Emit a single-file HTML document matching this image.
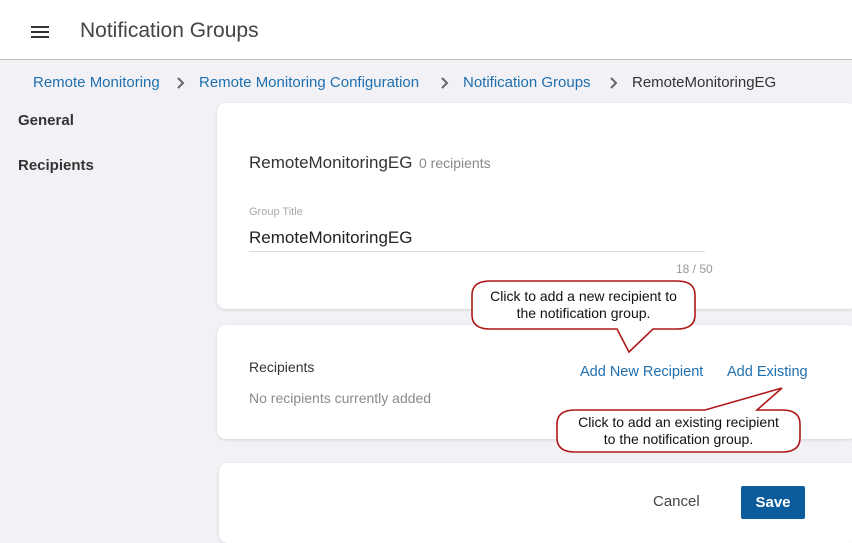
<!DOCTYPE html>
<html><head><meta charset="utf-8"><style>
*{margin:0;padding:0;box-sizing:border-box}
body{width:852px;height:529px;overflow:hidden;background:#f2f2f6;font-family:"Liberation Sans",sans-serif;position:relative}
.a{position:absolute;white-space:nowrap}
.hdr{position:absolute;left:0;top:0;width:852px;height:60px;background:#fff;border-bottom:1px solid #bdbdbd}
.card{position:absolute;background:#fff;border-radius:9px;box-shadow:0 1px 3px rgba(0,0,0,.12)}
.bl{color:#1f6fae;font-size:15px}
.gt{color:#8a8a8a;font-size:16px}
</style></head><body>
<div class="hdr">
 <div class="a" style="left:31px;top:26px;width:18px;height:2px;background:#333"></div>
 <div class="a" style="left:31px;top:31px;width:18px;height:2px;background:#333"></div>
 <div class="a" style="left:31px;top:36px;width:18px;height:2px;background:#333"></div>
 <div class="a" style="left:80px;top:19px;font-size:21px;color:#444">Notification Groups</div>
</div>
<div class="a bl" style="left:33px;top:74px">Remote Monitoring</div>
<div class="a bl" style="left:199px;top:74px">Remote Monitoring Configuration</div>
<div class="a bl" style="left:463px;top:74px">Notification Groups</div>
<div class="a" style="left:632px;top:74px;font-size:15px;color:#333">RemoteMonitoringEG</div>
<svg class="a" style="left:0;top:0" width="852" height="100">
 <g fill="none" stroke="#666" stroke-width="2">
  <polyline points="178,78 183,83 178,88"/>
  <polyline points="442,78 447,83 442,88"/>
  <polyline points="611,78 616,83 611,88"/>
 </g>
</svg>
<div class="a" style="left:18px;top:112px;font-size:15px;font-weight:bold;color:#333">General</div>
<div class="a" style="left:18px;top:157px;font-size:15px;font-weight:bold;color:#333">Recipients</div>

<div class="card" style="left:217px;top:103px;width:640px;height:206px"></div>
<div class="a" style="left:249px;top:153px;font-size:17px;color:#333">RemoteMonitoringEG</div>
<div class="a" style="left:419px;top:155px;font-size:14px;color:#888">0 recipients</div>
<div class="a" style="left:249px;top:206px;font-size:11px;color:#aaa">Group Title</div>
<div class="a" style="left:249px;top:228px;font-size:17px;color:#222">RemoteMonitoringEG</div>
<div class="a" style="left:249px;top:251px;width:456px;height:1px;background:#ddd"></div>
<div class="a" style="left:676px;top:262px;font-size:12px;color:#999">18 / 50</div>

<div class="card" style="left:217px;top:325px;width:640px;height:114px"></div>
<div class="a" style="left:249px;top:359px;font-size:14px;color:#333">Recipients</div>
<div class="a gt" style="left:249px;top:390px;font-size:14px">No recipients currently added</div>
<div class="a bl" style="left:580px;top:364px;font-size:14.5px">Add New Recipient</div>
<div class="a bl" style="left:727px;top:364px;font-size:14.5px">Add Existing</div>

<div class="card" style="left:219px;top:463px;width:640px;height:80px"></div>
<div class="a" style="left:653px;top:493px;font-size:15px;color:#444">Cancel</div>
<div class="a" style="left:741px;top:486px;width:64px;height:33px;background:#0b5c9c;border-radius:2px;color:#fff;font-weight:bold;font-size:15px;text-align:center;line-height:33px">Save</div>

<svg class="a" style="left:0;top:0" width="852" height="529">
 <path d="M490 281 H677 Q695 281 695 295 V315 Q695 329 677 329 H653 L629 352 L617 329 H490 Q472 329 472 315 V295 Q472 281 490 281 Z" fill="#fff" stroke="#b01818" stroke-width="1.6"/>
 <path d="M575 410 H705 L782 388 L757 410 H782 Q800 410 800 424 V438 Q800 452 782 452 H575 Q557 452 557 438 V424 Q557 410 575 410 Z" fill="#fff" stroke="#b01818" stroke-width="1.6"/>
</svg>
<div class="a" style="left:472px;top:288px;width:223px;text-align:center;font-size:14px;line-height:17px;color:#111;white-space:normal">Click to add a new recipient to<br>the notification group.</div>
<div class="a" style="left:557px;top:414px;width:243px;text-align:center;font-size:14px;line-height:17px;color:#111;white-space:normal">Click to add an existing recipient<br>to the notification group.</div>
</body></html>
